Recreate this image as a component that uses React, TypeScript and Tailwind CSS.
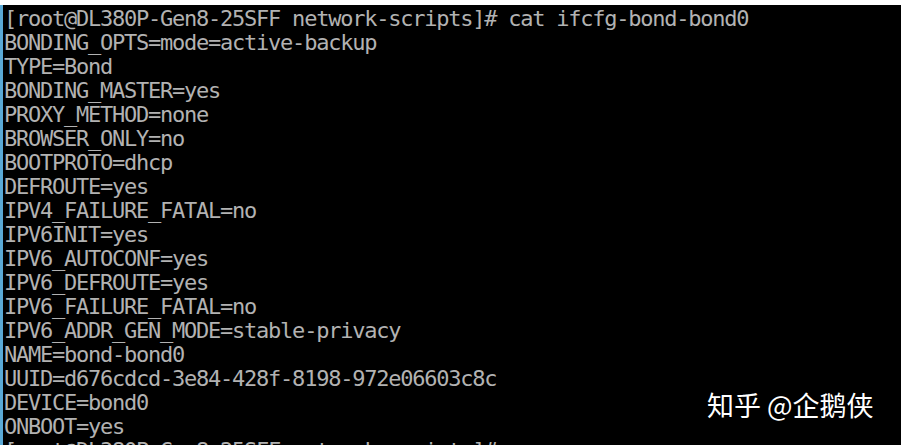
import React from "react"

const lines = [
  "[root@DL380P-Gen8-25SFF network-scripts]# cat ifcfg-bond-bond0",
  "BONDING_OPTS=mode=active-backup",
  "TYPE=Bond",
  "BONDING_MASTER=yes",
  "PROXY_METHOD=none",
  "BROWSER_ONLY=no",
  "BOOTPROTO=dhcp",
  "DEFROUTE=yes",
  "IPV4_FAILURE_FATAL=no",
  "IPV6INIT=yes",
  "IPV6_AUTOCONF=yes",
  "IPV6_DEFROUTE=yes",
  "IPV6_FAILURE_FATAL=no",
  "IPV6_ADDR_GEN_MODE=stable-privacy",
  "NAME=bond-bond0",
  "UUID=d676cdcd-3e84-428f-8198-972e06603c8c",
  "DEVICE=bond0",
  "ONBOOT=yes",
  "[root@DL380P-Gen8-25SFF network-scripts]#",
]

export default function App() {
  return (
    <div className="relative w-[901px] h-[445px] overflow-hidden bg-black flex flex-col">
      <div className="h-[5px] bg-white shrink-0" />

      <div className="flex flex-1 min-h-0">
        <div className="w-[3px] bg-[#5aa9d6] shrink-0" />
        <pre className="pl-[1px] pt-[2px] text-[#b2b2b2] font-['DejaVu_Sans_Mono',monospace] text-[22px] leading-[24px] tracking-[-1.24px] whitespace-pre">
          {lines.map((line, i) => (
            <div key={i} className="h-[24px]">{line}</div>
          ))}
        </pre>
      </div>

      {/* watermark */}
      <div className="absolute left-[707px] top-[388px] text-white text-[27px] leading-[34px] font-['Noto_Sans_CJK_SC',sans-serif] whitespace-nowrap">
        知乎 @企鹅侠
      </div>
    </div>
  )
}
